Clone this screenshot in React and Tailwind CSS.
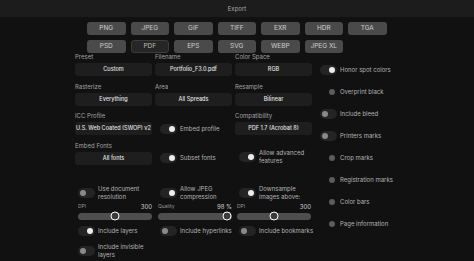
const formats = [
    ["PNG", "JPEG", "GIF", "TIFF", "EXR", "HDR", "TGA"],
    ["PSD", "PDF", "EPS", "SVG", "WEBP", "JPEG XL"],
]

function Toggle({state}) {
    if (state === "disabled") {
        return (
            <div className="flex h-[10px] w-[17px] shrink-0 items-center px-[2px]">
                <div className="ml-auto h-[6px] w-[6px] rounded-full bg-[#5c5c5c]"/>
            </div>
        )
    }
    const on = state === "on"
    return (
        <div className="flex h-[10px] w-[17px] shrink-0 items-center rounded-full bg-[#242424] px-[2px]">
            <div className={on ? "ml-auto h-[6px] w-[6px] rounded-full bg-[#ececec]" : "h-[6px] w-[6px] rounded-full bg-[#8a8a8a]"}/>
        </div>
    )
}

function ToggleRow({state, children}) {
    return (
        <div className="flex items-center gap-[3px]">
            <Toggle state={state}/>
            <div className="whitespace-nowrap text-[6px] leading-[8px] text-[#b4b4b4]">{children}</div>
        </div>
    )
}

function Field({label, value}) {
    return (
        <div className="flex flex-col">
            <div className="h-[8px] text-[6px] leading-[8px] text-[#a2a2a2]">{label}</div>
            <div className="mt-[2px] flex h-[13px] items-center justify-center whitespace-nowrap rounded-[3px] bg-[#1e1e1e] text-[5.5px] font-medium text-[#e2e2e2]">
                {value}
            </div>
        </div>
    )
}

function Slider({label, value, pos}) {
    return (
        <div className="flex w-[74px] flex-col">
            <div className="flex h-[8px] items-center justify-between text-[5px] text-[#9a9a9a]">
                <span>{label}</span>
                <span className="text-[6px] text-[#cfcfcf]">{value}</span>
            </div>
            <div className="relative mt-[2px] h-[7px] rounded-full bg-[#4e4e4e]">
                <div
                    className="absolute top-1/2 h-[9px] w-[9px] -translate-x-1/2 -translate-y-1/2 rounded-full border-[1.5px] border-white bg-[#3a3a3a]"
                    style={{left: pos}}
                />
            </div>
        </div>
    )
}

export default function App() {
    return (
        <div className="h-[261px] w-[474px] overflow-hidden bg-[#111111] font-['Inter',sans-serif]">
            <div className="flex h-[17px] items-center justify-center bg-[#1c1c1c] text-[6px] text-[#a8a8a8]">
                Export
            </div>

            <div className="mt-[5px] flex flex-col items-center gap-[5px]">
                {formats.map((row, i) => (
                    <div key={i} className="flex w-[300px] gap-[5px]">
                        {row.map(f => (
                            <div
                                key={f}
                                className={
                                    f === "PDF"
                                        ? "flex h-[13px] w-[38.5px] items-center justify-center rounded-[3px] border border-[#3c3c3c] bg-[#262626] text-[6.5px] text-[#bdbdbd]"
                                        : "flex h-[13px] w-[38.5px] items-center justify-center rounded-[3px] bg-[#4a4a4a] text-[6.5px] text-[#cdcdcd]"
                                }
                            >
                                {f}
                            </div>
                        ))}
                    </div>
                ))}
            </div>

            <div className="ml-[75px] flex">
                <div className="w-[237px]">
                    <div className="grid grid-cols-[77px_77px_77px] gap-x-[3px] gap-y-[6.5px]">
                        <Field label="Preset" value="Custom"/>
                        <Field label="Filename" value="Portfolio_F3.0.pdf"/>
                        <Field label="Color Space" value="RGB"/>

                        <Field label="Rasterize" value="Everything"/>
                        <Field label="Area" value="All Spreads"/>
                        <Field label="Resample" value="Bilinear"/>

                        <Field label="ICC Profile" value="U.S. Web Coated (SWOP) v2"/>
                        <div className="flex items-end pb-[1.5px] pl-[5px]">
                            <ToggleRow state="on">Embed profile</ToggleRow>
                        </div>
                        <Field label="Compatibility" value="PDF 1.7 (Acrobat 8)"/>

                        <Field label="Embed Fonts" value="All fonts"/>
                        <div className="flex items-end pb-[1.5px] pl-[5px]">
                            <ToggleRow state="on">Subset fonts</ToggleRow>
                        </div>
                        <div className="flex items-end pl-[4px]">
                            <ToggleRow state="on">Allow advanced<br/>features</ToggleRow>
                        </div>
                    </div>

                    <div className="mt-[20px] grid grid-cols-[77px_77px_77px] gap-x-[3px]">
                        <div className="pl-[3px]">
                            <ToggleRow state="off">Use document<br/>resolution</ToggleRow>
                        </div>
                        <div className="pl-[5px]">
                            <ToggleRow state="on">Allow JPEG<br/>compression</ToggleRow>
                        </div>
                        <div className="pl-[4px]">
                            <ToggleRow state="on">Downsample<br/>images above:</ToggleRow>
                        </div>
                    </div>

                    <div className="mt-[2px] grid grid-cols-[77px_77px_77px] gap-x-[3px]">
                        <div className="pl-[3px]"><Slider label="DPI" value="300" pos="50%"/></div>
                        <div className="pl-[3px]"><Slider label="Quality" value="98 %" pos="93%"/></div>
                        <div className="pl-[2px]"><Slider label="DPI" value="300" pos="50%"/></div>
                    </div>

                    <div className="mt-[6px] grid grid-cols-[77px_77px_77px] gap-x-[3px]">
                        <div className="pl-[3px]"><ToggleRow state="on">Include layers</ToggleRow></div>
                        <div className="pl-[5px]"><ToggleRow state="off">Include hyperlinks</ToggleRow></div>
                        <div className="pl-[4px]"><ToggleRow state="off">Include bookmarks</ToggleRow></div>
                    </div>

                    <div className="mt-[7px] pl-[3px]">
                        <ToggleRow state="off">Include invisible<br/>layers</ToggleRow>
                    </div>
                </div>

                <div className="ml-[8px] flex flex-col gap-[12px] pt-[12px]">
                    <ToggleRow state="on">Honor spot colors</ToggleRow>
                    <ToggleRow state="disabled">Overprint black</ToggleRow>
                    <ToggleRow state="off">Include bleed</ToggleRow>
                    <ToggleRow state="off">Printers marks</ToggleRow>
                    <ToggleRow state="disabled">Crop marks</ToggleRow>
                    <ToggleRow state="disabled">Registration marks</ToggleRow>
                    <ToggleRow state="disabled">Color bars</ToggleRow>
                    <ToggleRow state="disabled">Page information</ToggleRow>
                </div>
            </div>
        </div>
    )
}
